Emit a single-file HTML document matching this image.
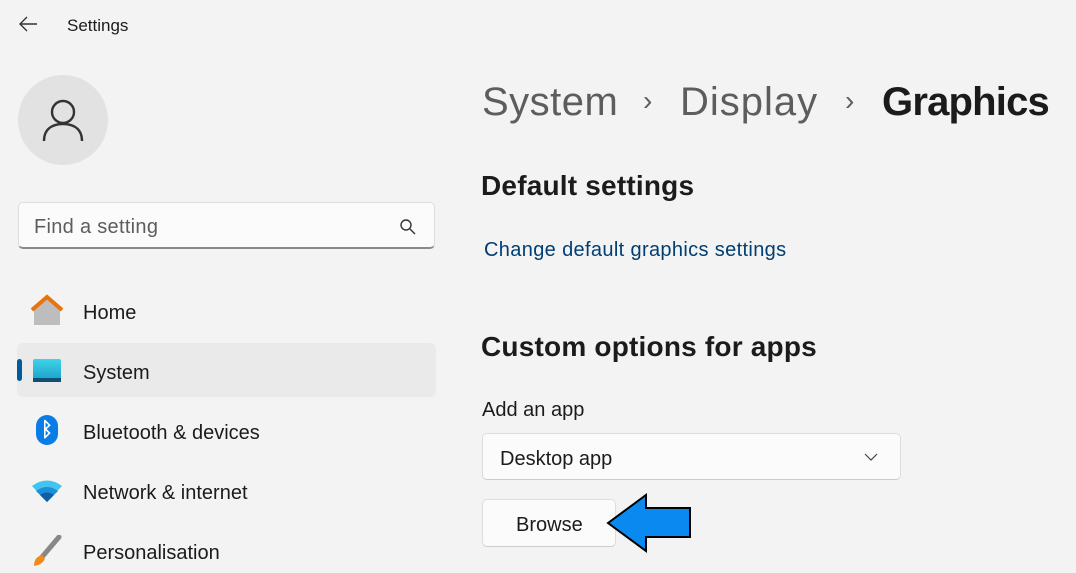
<!DOCTYPE html>
<html><head><style>
body{margin:0;width:1076px;height:573px;background:#f3f3f3;font-family:"Liberation Sans",sans-serif;color:#1b1b1b;position:relative;overflow:hidden}
.a{position:absolute;white-space:nowrap}
.nav{position:absolute;left:83px;font-size:20px}
</style></head><body>
<svg class="a" style="left:17px;top:14px" width="22" height="20"><path d="M20 10H3M10 3L3 10L10 17" fill="none" stroke="#333" stroke-width="1.4"/></svg>
<div class="a" style="left:67px;top:16px;font-size:17px">Settings</div>
<div class="a" style="left:18px;top:75px;width:90px;height:90px;border-radius:50%;background:#e2e2e2"></div>
<svg class="a" style="left:40px;top:95px" width="46" height="50"><circle cx="23" cy="17" r="11" fill="none" stroke="#333" stroke-width="2.4"/><path d="M4 46c0-12 8-17 19-17s19 5 19 17" fill="none" stroke="#333" stroke-width="2.4"/></svg>
<div class="a" style="left:18px;top:202px;width:415px;height:44px;background:#fbfbfb;border:1px solid #ddd;border-bottom:2px solid #8a8a8a;border-radius:5px"></div>
<div class="a" style="left:34px;top:216px;font-size:20px;color:#5d5d5d;letter-spacing:0.3px">Find a setting</div>
<svg class="a" style="left:399px;top:218px" width="18" height="18"><circle cx="7" cy="7" r="5" fill="none" stroke="#333" stroke-width="1.4"/><path d="M11 11l5 5" stroke="#333" stroke-width="1.4"/></svg>
<div class="a" style="left:17px;top:343px;width:419px;height:54px;background:#eaeaea;border-radius:6px"></div>
<div class="a" style="left:17px;top:359px;width:5px;height:22px;background:#005a9e;border-radius:3px"></div>
<svg class="a" style="left:30px;top:294px" width="34" height="34"><path d="M4 14L17 3L30 14V31H4Z" fill="#bdbdbd"/><path d="M2 16L17 3L32 16" fill="none" stroke="#e8730c" stroke-width="4"/></svg>
<div class="a" style="left:33px;top:359px;width:28px;height:22px;border-radius:2px;background:linear-gradient(#3fd3ea,#1a9fc9)"></div>
<div class="a" style="left:33px;top:378px;width:28px;height:4px;background:#0e4f7a"></div>
<div class="a" style="left:36px;top:415px;width:22px;height:30px;border-radius:11px;background:#0a7ce6;color:#fff;font-size:20px;text-align:center;line-height:30px;font-weight:bold">ᛒ</div>
<svg class="a" style="left:31px;top:479px" width="32" height="24"><path d="M1 7Q16 -4 31 7L16 23Z" fill="#41c4f0"/><path d="M5 12Q16 4 27 12L16 23Z" fill="#1c8fd8"/><path d="M9 16Q16 11 23 16L16 23Z" fill="#0d5fa8"/></svg>
<svg class="a" style="left:32px;top:535px" width="30" height="32"><path d="M27 2L10 22" stroke="#888" stroke-width="5" stroke-linecap="round"/><path d="M10 20Q2 22 2 31Q10 30 13 24Z" fill="#f08a1c"/></svg>
<div class="nav" style="top:302px">Home</div>
<div class="nav" style="top:362px">System</div>
<div class="nav" style="top:422px">Bluetooth &amp; devices</div>
<div class="nav" style="top:482px">Network &amp; internet</div>
<div class="nav" style="top:542px">Personalisation</div>
<div class="a" style="left:482px;top:80px;font-size:40px;color:#5d5d5d;letter-spacing:0.5px">System</div>
<div class="a" style="left:643px;top:85px;font-size:28px;color:#5d5d5d">›</div>
<div class="a" style="left:680px;top:80px;font-size:40px;color:#5d5d5d;letter-spacing:1px">Display</div>
<div class="a" style="left:845px;top:85px;font-size:28px;color:#5d5d5d">›</div>
<div class="a" style="left:882px;top:80px;font-size:40px;font-weight:bold;color:#1b1b1b;letter-spacing:-0.8px">Graphics</div>
<div class="a" style="left:481px;top:170px;font-size:28px;font-weight:bold;letter-spacing:0.2px">Default settings</div>
<div class="a" style="left:484px;top:239px;font-size:20px;color:#003e73;letter-spacing:0.35px">Change default graphics settings</div>
<div class="a" style="left:481px;top:331px;font-size:28px;font-weight:bold;letter-spacing:0.2px">Custom options for apps</div>
<div class="a" style="left:482px;top:399px;font-size:20px">Add an app</div>
<div class="a" style="left:482px;top:433px;width:417px;height:45px;background:#fbfbfb;border:1px solid #ddd;border-bottom-color:#ccc;border-radius:5px"></div>
<div class="a" style="left:500px;top:448px;font-size:20px">Desktop app</div>
<svg class="a" style="left:864px;top:452px" width="14" height="10"><path d="M1 2l6 6 6-6" fill="none" stroke="#444" stroke-width="1.2"/></svg>
<div class="a" style="left:482px;top:499px;width:132px;height:46px;background:#fbfbfb;border:1px solid #ddd;border-bottom-color:#ccc;border-radius:5px"></div>
<div class="a" style="left:516px;top:514px;font-size:20px">Browse</div>
<svg class="a" style="left:600px;top:490px" width="96" height="66"><path d="M8 33L46 5V18H90V47H46V61Z" fill="#0a8af0" stroke="#000" stroke-width="2" stroke-linejoin="miter"/></svg>
</body></html>
